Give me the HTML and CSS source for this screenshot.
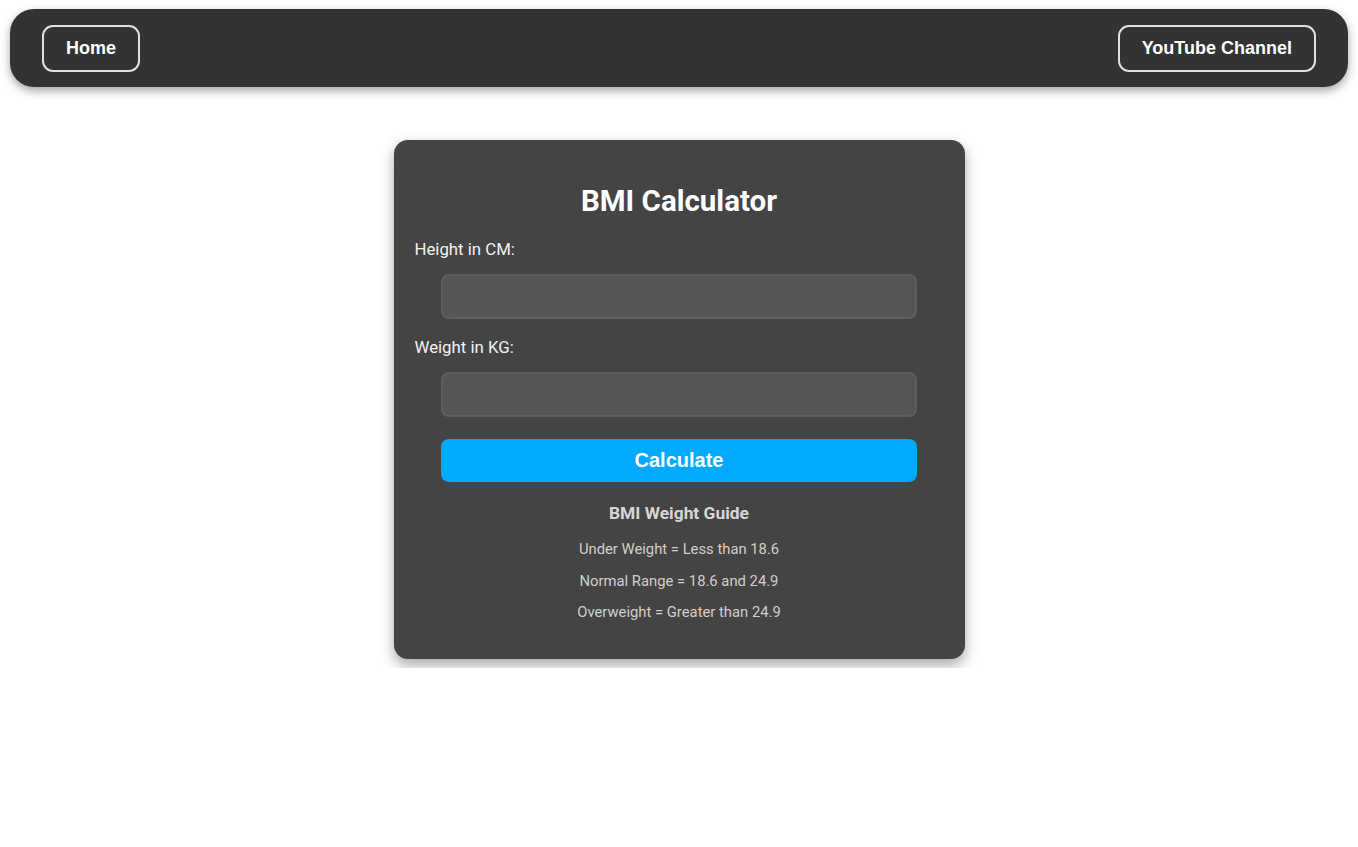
FILE: index.html
```html
<!DOCTYPE html>
<html lang="en">
<head>
<meta charset="utf-8">
<title>BMI Calculator</title>
<link rel="stylesheet" href="styles.css">
</head>
<body>
<nav class="navbar">
  <a class="nav-btn" href="#">Home</a>
  <a class="nav-btn" href="#">YouTube Channel</a>
</nav>
<main class="page">
  <section class="card">
    <h1 class="title">BMI Calculator</h1>
    <label class="label" for="h">Height in CM:</label>
    <input class="field" id="h" type="text">
    <label class="label" for="w">Weight in KG:</label>
    <input class="field" id="w" type="text">
    <button class="calc" type="button">Calculate</button>
    <h2 class="guide-title">BMI Weight Guide</h2>
    <p class="guide">Under Weight = Less than 18.6</p>
    <p class="guide">Normal Range = 18.6 and 24.9</p>
    <p class="guide">Overweight = Greater than 24.9</p>
  </section>
</main>
</body>
</html>
```
FILE: styles.css
```css
* { box-sizing: border-box; }
html, body { margin: 0; padding: 0; background: #fff; }
body {
  padding: 9px 10px;
  font-family: Roboto, "Liberation Sans", sans-serif;
}
.navbar {
  height: 78px;
  background: #333333;
  border-radius: 24px;
  display: flex;
  align-items: center;
  justify-content: space-between;
  padding: 0 32px;
  box-shadow: 0 4px 10px rgba(0,0,0,0.35);
}
.nav-btn {
  display: inline-flex;
  align-items: center;
  height: 47px;
  padding: 0 22px;
  border: 2px solid #e0e0e0;
  border-radius: 11px;
  color: #fff;
  text-decoration: none;
  font-family: "Liberation Sans", Arial, sans-serif;
  font-weight: bold;
  font-size: 18px;
}
.page {
  display: flex;
  justify-content: center;
  padding-top: 53px;
}
.card {
  width: 571px;
  background: #444444;
  border-radius: 14px;
  padding: 42px 21px 36px;
  display: flex;
  flex-direction: column;
  align-items: center;
  box-shadow: 0 6px 14px rgba(0,0,0,0.35);
}
.title {
  margin: 0 0 19px;
  color: #fff;
  font-size: 29.5px;
  font-weight: bold;
  line-height: 38px;
}
.label {
  align-self: flex-start;
  color: #f2f2f2;
  font-size: 16.8px;
  line-height: 20px;
  margin-bottom: 15px;
}
.field {
  width: 476px;
  height: 45px;
  background: #555555;
  border: 2px solid #5e5e5e;
  border-radius: 8px;
  margin-bottom: 18px;
  outline: none;
}
.calc {
  width: 476px;
  height: 43px;
  margin-top: 4px;
  background: #00aaff;
  border: none;
  border-radius: 8px;
  color: #fff;
  font-family: "Liberation Sans", Arial, sans-serif;
  font-weight: bold;
  font-size: 20px;
}
.guide-title {
  margin: 20px 0 14px;
  color: #d6d6d6;
  font-size: 17.4px;
  font-weight: bold;
  line-height: 22px;
}
.guide {
  margin: 0 0 9.5px;
  color: #cfcfcf;
  font-size: 14.8px;
  line-height: 22px;
}
.guide:last-child { margin-bottom: 0; }
```
